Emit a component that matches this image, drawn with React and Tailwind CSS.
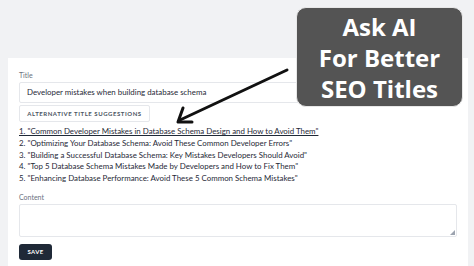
export default function App() {
  const items = [
    '1. "Common Developer Mistakes in Database Schema Design and How to Avoid Them"',
    '2. "Optimizing Your Database Schema: Avoid These Common Developer Errors"',
    '3. "Building a Successful Database Schema: Key Mistakes Developers Should Avoid"',
    '4. "Top 5 Database Schema Mistakes Made by Developers and How to Fix Them"',
    '5. "Enhancing Database Performance: Avoid These 5 Common Schema Mistakes"',
  ];
  return (
    <div className="relative w-[474px] h-[266px] overflow-hidden bg-[#f1f2f4]" style={{ fontFamily: 'Lato, "Noto Sans", sans-serif' }}>
      <div className="h-[58px]" />
      <div className="ml-[8px] mr-[6px] h-[208px] bg-white px-[11px] pt-[12px] text-[#374151]">
        <div className="text-[7px] leading-[10px] text-[#6b7280]">Title</div>
        <div className="mt-[2px] h-[21px] w-[438px] border border-[#e5e7eb] rounded-[2px] px-[7px] flex items-center text-[7.9px] text-[#1f2937]">
          Developer mistakes when building database schema
        </div>
        <div className="mt-[2px] h-[17px] w-[131px] border border-[#e5e7eb] rounded-[2px] flex items-center justify-center text-[6px] font-bold tracking-[0.09em] text-[#4b5563]">
          ALTERNATIVE TITLE SUGGESTIONS
        </div>
        <div className="mt-[4px] flex flex-col text-[7.9px] leading-[11.8px] text-[#1f2937]">
          {items.map((t, i) => (
            <div key={i} className={i === 0 ? 'underline' : ''}>{t}</div>
          ))}
        </div>
        <div className="mt-[7px] text-[7px] leading-[10px] text-[#6b7280]">Content</div>
        <div className="relative mt-[2px] h-[33px] w-[438px] border border-[#e5e7eb] rounded-[2px]">
          <svg className="absolute right-[1px] bottom-[1px]" width="5" height="5" viewBox="0 0 5 5">
            <path d="M5 0 L5 5 L0 5 Z" fill="#9ca3af" />
          </svg>
        </div>
        <div className="mt-[7px] h-[16px] w-[33px] rounded-[3px] bg-[#1f2937] flex items-center justify-center text-white text-[6px] font-bold tracking-[0.05em]">
          SAVE
        </div>
      </div>

      <svg className="absolute left-0 top-0" width="474" height="266" viewBox="0 0 474 266">
        <path d="M287 70 L180 120" stroke="#111" strokeWidth="3" strokeLinecap="round" fill="none" />
        <path d="M183 108 L178 122 L192 122" stroke="#111" strokeWidth="3" strokeLinecap="round" strokeLinejoin="round" fill="none" />
      </svg>

      <div className="absolute left-[296px] top-[7px] w-[167px] h-[100px] rounded-[10px] bg-[#545454] border border-[#e8e8e8] flex flex-col items-center justify-center text-white font-bold text-[24px] leading-[31px]" style={{ fontFamily: '"Open Sans", sans-serif' }}>
        <div>Ask AI</div>
        <div>For Better</div>
        <div>SEO Titles</div>
      </div>
    </div>
  );
}
